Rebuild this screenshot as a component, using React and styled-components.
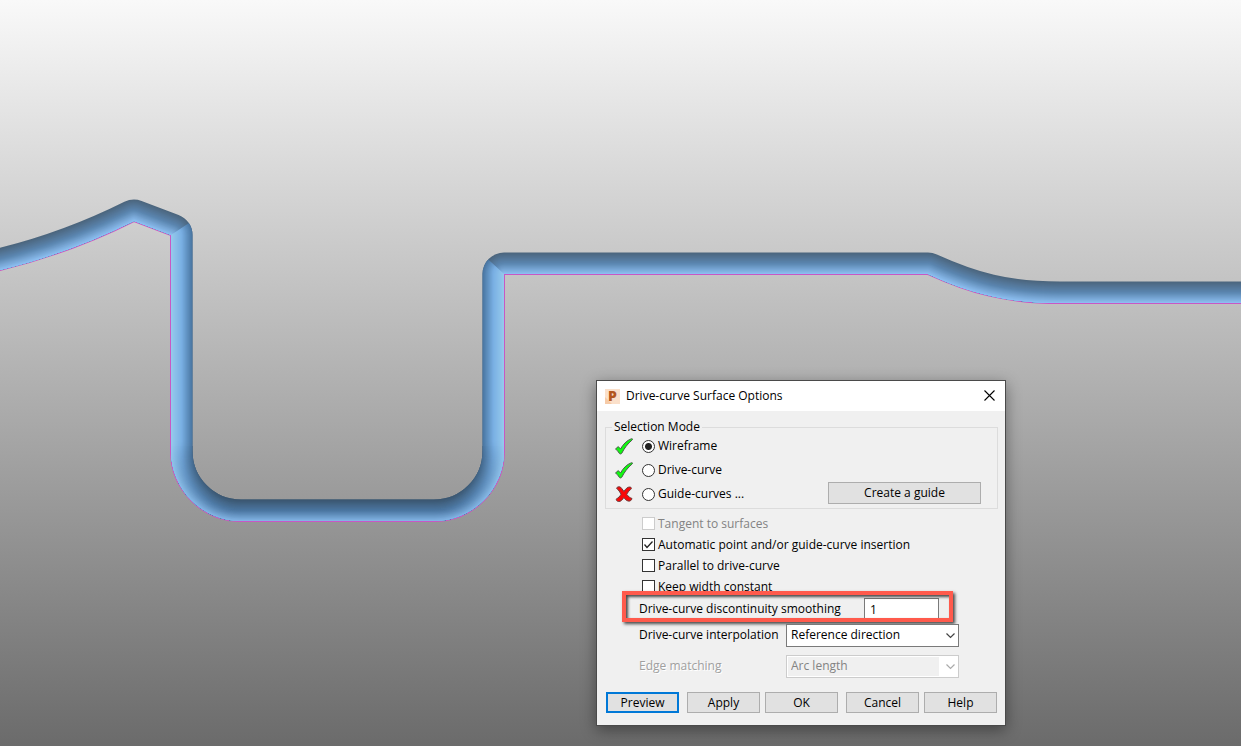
import React, {useState} from 'react';
import styled, {createGlobalStyle, css} from 'styled-components';

const GlobalStyle = createGlobalStyle`
  * {
    box-sizing: border-box;
  }

  body {
    margin: 0;
    font-family: "Open Sans", "Noto Sans", sans-serif;
    font-size: 12px;
    line-height: 16px;
    color: #000;
  }

  button, input, select {
    font: inherit;
    color: inherit;
  }
`;

const Viewport = styled.main`
  position: relative;
  width: 100%;
  min-height: 100vh;
  overflow: hidden;
  background: linear-gradient(#f9f9f9, #6b6b6b);
`;

const Scene = styled.svg`
  position: absolute;
  top: 0;
  left: 0;
  display: block;
`;

const Dialog = styled.section`
  position: absolute;
  top: 380px;
  left: 596px;
  width: 410px;
  border: 1px solid #4a4a4a;
  background: #f0f0f0;
  box-shadow: 0 4px 14px rgba(0, 0, 0, 0.4);
`;

const TitleBar = styled.header`
  display: flex;
  align-items: center;
  gap: 6px;
  height: 30px;
  padding: 0 9px 0 8px;
  background: #fff;
`;

const LogoMark = styled.svg`
  overflow: visible;
`;

const Title = styled.h1`
  flex: 1;
  margin: 0;
  font-size: 12px;
  font-weight: normal;
`;

const CloseButton = styled.button`
  display: flex;
  padding: 0 0 2px;
  border: 0;
  background: none;
`;

const Form = styled.form`
  padding: 9px 7px 8px 8px;
`;

const Group = styled.fieldset`
  margin: 0;
  padding: 0 16px 2px 8px;
  border: 1px solid #dcdcdc;
`;

const Legend = styled.legend`
  height: 14px;
  padding: 0 2px;
  margin-left: -2px;
  line-height: 14px;
`;

const GroupBody = styled.div`
  display: flex;
  justify-content: space-between;
  align-items: flex-end;
`;

const Mode = styled.div`
  display: flex;
  align-items: center;
  gap: 8px;
  height: 24px;
`;

const Choice = styled.label`
  display: flex;
  align-items: center;
  gap: 3px;
  color: ${({$muted}) => $muted ? '#838383' : '#000'};
`;

const Radio = styled.input`
  appearance: none;
  width: 13px;
  height: 13px;
  margin: 0;
  border: 1px solid #333;
  border-radius: 50%;
  background: #fff;

  &:checked {
    background: radial-gradient(circle, #222 3px, #fff 4px);
  }
`;

const Options = styled.div`
  display: flex;
  flex-direction: column;
  padding: 4px 0 0 37px;
`;

const Option = styled.div`
  display: flex;
  align-items: center;
  height: 21px;
`;

const CheckBox = styled.span`
  display: grid;
  width: 13px;
  height: 13px;

  input, svg {
    grid-area: 1 / 1;
  }

  svg {
    pointer-events: none;
  }
`;

const Check = styled.input`
  appearance: none;
  width: 13px;
  height: 13px;
  margin: 0;
  border: 1px solid #333;
  background: #fff;

  &:disabled {
    border-color: #ccc;
  }
`;

const Fields = styled.div`
  padding: 0 39px 0 34px;
`;

const Field = styled.div`
  display: grid;
  grid-template-columns: 1fr 173px;
  align-items: center;
  height: ${({$height}) => $height}px;
`;

const SmoothingField = styled.div`
  position: relative;
  display: flex;
  justify-content: space-between;
  align-items: center;
  height: 24px;
  padding-right: 20px;
`;

const FieldLabel = styled.label`
  color: ${({$muted}) => $muted ? '#a0a0a0' : '#000'};
  text-shadow: ${({$muted}) => $muted ? '1px 1px #fff' : 'none'};
`;

const TextBox = styled.input`
  width: 75px;
  height: 22px;
  padding: 0 5px;
  border: 1px solid #7a7a7a;
  background: #fff;
`;

const Highlight = styled.span`
  position: absolute;
  top: -6px;
  right: 6px;
  bottom: -1px;
  left: -17px;
  border: 4px solid #ff5a4c;
  box-shadow: 2px 2px 3px rgba(0, 0, 0, 0.7), inset 2px 2px 3px rgba(0, 0, 0, 0.7);
  pointer-events: none;
`;

const SelectWrapper = styled.div`
  position: relative;

  svg {
    position: absolute;
    top: 8px;
    right: 4px;
    pointer-events: none;
  }
`;

const Select = styled.select`
  appearance: none;
  display: block;
  width: 100%;
  height: 23px;
  padding: 0 20px 0 4px;
  border: 1px solid #7a7a7a;
  border-radius: 0;
  background: #fff;

  &:disabled {
    border-color: #ccc;
    background: linear-gradient(90deg, #f0f0f0 152px, #fff 152px);
    box-shadow: inset 0 0 0 1px #fff;
    color: #838383;
    opacity: 1;
  }
`;

const Button = styled.button`
  width: 73px;
  height: 21px;
  padding: 0;
  border: 1px solid #adadad;
  background: #e1e1e1;
  line-height: 18px;

  ${({$wide}) => $wide && css`
    width: 153px;
    height: 22px;
    margin-bottom: 2px;
  `}

  ${({$primary}) => $primary && css`
    border: 2px solid #0078d7;
    line-height: 16px;
  `}
`;

const Actions = styled.footer`
  display: flex;
  justify-content: space-between;
  padding: 9px 1px 4px;
`;

const ActionGroup = styled.div`
  display: flex;
  gap: 5px;
`;

const CURVE = 'M-20 275L0 270C45 259 90 243 134 221L171 235V451A70 70 0 0 0 241 521H434A70 70 0 0 0 504 451V274H928C970 293 1005 303 1060 303H1260';
const THICKNESS = 22;

// shades run from the curve out to the far edge of the surface
const FLAT = [[142, 192, 242], [91, 134, 176], [76, 102, 126]];
const UPRIGHT = [[150, 202, 236], [122, 176, 228], [74, 118, 162]];
const TROUGH = [[132, 181, 230], [74, 117, 160], [56, 80, 102]];

const shade = ([near, middle, far], t) => {
  const [from, to, k] = t < 0.5 ? [near, middle, t * 2] : [middle, far, t * 2 - 1];
  return `rgb(${from.map((c, i) => Math.round(c + (to[i] - c) * k)).join(',')})`;
};

const Tube = ({ramp, mask}) => (
  <g mask={mask}>
    <g clipPath={'url(#above)'} fill={'none'} strokeLinejoin={'round'}>
      {Array.from({length: THICKNESS}, (_, i) => THICKNESS - i).map(d => (
        <path key={d} d={CURVE} stroke={shade(ramp, (d - 1) / (THICKNESS - 1))} strokeWidth={d * 2 - 1}/>
      ))}
    </g>
  </g>
);

const Surface = () => (
  <Scene width={1241} height={746} viewBox={'0 0 1241 746'} aria-hidden={'true'}>
    <defs>
      <clipPath id={'above'}>
        <path d={`${CURVE}V-10H-20Z`}/>
      </clipPath>
      <linearGradient id={'fadeOut'} gradientUnits={'userSpaceOnUse'} x1={0} y1={440} x2={0} y2={512}>
        <stop offset={0} stopColor={'#fff'}/>
        <stop offset={1} stopColor={'#000'}/>
      </linearGradient>
      <mask id={'uprights'} maskUnits={'userSpaceOnUse'} x={0} y={0} width={1241} height={746}>
        <path d={'M171 235L198 217V440H338V530H160V235ZM504 274L478 250V440H338V530H520V274Z'} fill={'url(#fadeOut)'}/>
      </mask>
      <mask id={'trough'} maskUnits={'userSpaceOnUse'} x={0} y={0} width={1241} height={746}>
        <rect x={160} y={446} width={360} height={84} fill={'#fff'}/>
      </mask>
    </defs>
    <path d={CURVE} fill={'none'} stroke={'#c858c4'} strokeWidth={2}/>
    <Tube ramp={FLAT}/>
    <Tube ramp={TROUGH} mask={'url(#trough)'}/>
    <Tube ramp={UPRIGHT} mask={'url(#uprights)'}/>
  </Scene>
);

const Logo = () => (
  <LogoMark width={15} height={15} viewBox={'0 0 15 15'} aria-hidden={'true'}>
    <rect width={15} height={15} fill={'#fbe0ca'}/>
    <path d={'M0 15V8L7 15Z'} fill={'#f6cba8'}/>
    <text x={3} y={12} fontFamily={'Open Sans'} fontSize={14} fontWeight={800} fill={'#b4561d'}>P</text>
  </LogoMark>
);

const Tick = () => (
  <svg width={20} height={18} viewBox={'0 0 20 18'} aria-hidden={'true'}>
    <path d={'M1.500 12L4.300 9.600L6.500 12C9 7.500 12.500 3.500 17.500 1.700C18.600 1.400 18.900 2.300 18.100 3C13.500 6.800 10.200 11.500 7.800 16.200C7.200 17.200 5.700 17.200 5.200 16.200C4.300 14.500 3.200 13 1.500 12Z'} fill={'#10fa10'} stroke={'#4a5f4a'} strokeWidth={1} strokeLinejoin={'round'}/>
  </svg>
);

const Cross = () => (
  <svg width={20} height={18} viewBox={'0 0 20 18'} aria-hidden={'true'}>
    <path d={'M2.500 3C4 1.200 6.500 1.500 7.500 3.200L10 6.500C11.500 4 13.500 1.800 16 2C17.500 2.200 17.800 3.500 16.800 4.300C15 5.800 13.600 7.500 12.700 9.300C14.200 11.500 16 12.800 18 13.500C17.500 15.500 16 16.500 14 16C12.200 15.500 10.800 14 9.800 12.500C8.500 14.800 6.800 16.700 4.500 16.500C2.800 16.300 1.800 15 2.500 13.800C4.300 13 5.900 11.300 7.100 9.200C6 7 4.500 5 2.500 3Z'} fill={'#fa0808'} stroke={'#6b3c3c'} strokeWidth={1} strokeLinejoin={'round'}/>
  </svg>
);

const Chevron = ({color}) => (
  <svg width={9} height={7} viewBox={'0 0 9 7'} fill={'none'} stroke={color} aria-hidden={'true'}>
    <path d={'M0.5 1.500L4.500 5.500L8.500 1.500'} strokeWidth={1.2}/>
  </svg>
);

const MODES = [
  {name: 'Wireframe', ready: true},
  {name: 'Drive-curve', ready: true},
  {name: 'Guide-curves ...', ready: false},
];

const OPTIONS = [
  {name: 'Tangent to surfaces', disabled: true},
  {name: 'Automatic point and/or guide-curve insertion'},
  {name: 'Parallel to drive-curve'},
  {name: 'Keep width constant'},
];

const App = () => {
  const [mode, setMode] = useState('Wireframe');
  const [checked, setChecked] = useState([OPTIONS[1].name]);

  const toggle = name => setChecked(
    checked.includes(name) ? checked.filter(item => item !== name) : [...checked, name]
  );

  return (
    <Viewport>
      <GlobalStyle/>
      <Surface/>
      <Dialog role={'dialog'} aria-labelledby={'title'}>
        <TitleBar>
          <Logo/>
          <Title id={'title'}>Drive-curve Surface Options</Title>
          <CloseButton type={'button'} aria-label={'Close'}>
            <svg width={13} height={13} viewBox={'0 0 13 13'} stroke={'#000'} strokeWidth={1.1}>
              <path d={'M1.500 1.500L11.500 11.500M11.500 1.500L1.500 11.500'}/>
            </svg>
          </CloseButton>
        </TitleBar>
        <Form onSubmit={e => e.preventDefault()}>
          <Group>
            <Legend>Selection Mode</Legend>
            <GroupBody>
              <div>
                {MODES.map(({name, ready}) => (
                  <Mode key={name}>
                    {ready ? <Tick/> : <Cross/>}
                    <Choice>
                      <Radio type={'radio'} name={'mode'} checked={mode === name} onChange={() => setMode(name)}/>
                      {name}
                    </Choice>
                  </Mode>
                ))}
              </div>
              <Button type={'button'} $wide>Create a guide</Button>
            </GroupBody>
          </Group>
          <Options>
            {OPTIONS.map(({name, disabled}) => (
              <Option key={name}>
                <Choice $muted={disabled}>
                  <CheckBox>
                    <Check type={'checkbox'} disabled={disabled} checked={checked.includes(name)} onChange={() => toggle(name)}/>
                    {checked.includes(name) && (
                      <svg width={13} height={13} viewBox={'0 0 13 13'} fill={'none'} stroke={'#222'} strokeWidth={1.3}>
                        <path d={'M2.500 6.500L5 9.500L10.500 3.500'}/>
                      </svg>
                    )}
                  </CheckBox>
                  {name}
                </Choice>
              </Option>
            ))}
          </Options>
          <Fields>
            <SmoothingField>
              <FieldLabel htmlFor={'smoothing'}>Drive-curve discontinuity smoothing</FieldLabel>
              <TextBox id={'smoothing'} defaultValue={'1'}/>
              <Highlight/>
            </SmoothingField>
            <Field $height={28}>
              <FieldLabel htmlFor={'interpolation'}>Drive-curve interpolation</FieldLabel>
              <SelectWrapper>
                <Select id={'interpolation'}>
                  <option>Reference direction</option>
                </Select>
                <Chevron color={'#444'}/>
              </SelectWrapper>
            </Field>
            <Field $height={34}>
              <FieldLabel htmlFor={'matching'} $muted>Edge matching</FieldLabel>
              <SelectWrapper>
                <Select id={'matching'} disabled>
                  <option>Arc length</option>
                </Select>
                <Chevron color={'#aaa'}/>
              </SelectWrapper>
            </Field>
          </Fields>
          <Actions>
            <Button $primary>Preview</Button>
            <ActionGroup>
              <Button type={'button'}>Apply</Button>
              <Button type={'button'}>OK</Button>
            </ActionGroup>
            <ActionGroup>
              <Button type={'button'}>Cancel</Button>
              <Button type={'button'}>Help</Button>
            </ActionGroup>
          </Actions>
        </Form>
      </Dialog>
    </Viewport>
  );
};

export default App;
